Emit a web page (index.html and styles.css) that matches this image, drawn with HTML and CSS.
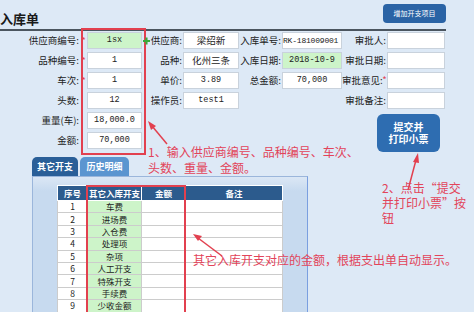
FILE: index.html
```html
<!DOCTYPE html>
<html lang="zh">
<head>
    <meta charset="UTF-8">
    <title>入库单</title>
    <link rel="stylesheet" href="styles.css">
</head>
<body>

<div class="page">
    <div class="top">
        <h1 class="title">入库单</h1>
        <div class="btn_add">增加开支项目</div>
    </div>

    <div class="form">
        <!-- row 1 -->
        <div class="label">供应商编号:</div><div class="star">*</div>
        <div class="input green mono">1sx</div>
        <div class="plus"><svg width="10" height="10" viewBox="0 0 10 10"><path d="M3.5 0h3v3.5H10v3H6.5V10h-3V6.5H0v-3h3.5z" fill="#39a939"/></svg></div>
        <div class="label">供应商:</div><div class="input">梁绍新</div>
        <div class="label">入库单号:</div><div class="input mono narrow">RK-181009001</div>
        <div class="label">审批人:</div><div class="input"></div>
        <!-- row 2 -->
        <div class="label">品种编号:</div><div class="star">*</div>
        <div class="input mono">1</div><div></div>
        <div class="label">品种:</div><div class="input">化州三条</div>
        <div class="label">入库日期:</div><div class="input green mono">2018-10-9</div>
        <div class="label">审批日期:</div><div class="input"></div>
        <!-- row 3 -->
        <div class="label">车次:</div><div class="star">*</div>
        <div class="input mono">1</div><div></div>
        <div class="label">单价:</div><div class="input mono">3.89</div>
        <div class="label">总金额:</div><div class="input mono">70,000</div>
        <div class="label">审批意见:<span class="red">*</span></div><div class="input"></div>
        <!-- row 4 -->
        <div class="label">头数:</div><div></div>
        <div class="input mono">12</div><div></div>
        <div class="label">操作员:</div><div class="input mono">test1</div>
        <div></div><div></div>
        <div class="label">审批备注:</div><div class="input"></div>
        <!-- row 5 -->
        <div class="label">重量(车):</div><div></div>
        <div class="input mono">18,000.0</div>
        <div></div><div></div><div></div><div></div><div></div>
        <!-- row 6 -->
        <div class="label">金额:</div><div></div>
        <div class="input mono">70,000</div>

        <div class="btn_submit">提交并<br>打印小票</div>
    </div>

    <div class="tabs">
        <div class="tab active">其它开支</div>
        <div class="tab">历史明细</div>
    </div>

    <div class="panel">
        <table class="grid">
            <tr>
                <th class="c_no">序号</th>
                <th class="c_name">其它入库开支</th>
                <th class="c_amount">金额</th>
                <th>备注</th>
            </tr>
            <tr><td>1</td><td class="green">车费</td><td></td><td></td></tr>
            <tr><td>2</td><td class="green">进场费</td><td></td><td></td></tr>
            <tr><td>3</td><td class="green">入仓费</td><td></td><td></td></tr>
            <tr><td>4</td><td class="green">处理项</td><td></td><td></td></tr>
            <tr><td>5</td><td class="green">杂项</td><td></td><td></td></tr>
            <tr><td>6</td><td class="green">人工开支</td><td></td><td></td></tr>
            <tr><td>7</td><td class="green">特殊开支</td><td></td><td></td></tr>
            <tr><td>8</td><td class="green">手续费</td><td></td><td></td></tr>
            <tr><td>9</td><td class="green">少收金额</td><td></td><td></td></tr>
        </table>
    </div>

    <!-- annotations drawn over the screen -->
    <div class="mark mark_form"></div>
    <div class="mark mark_table"></div>

    <svg class="arrows" width="474" height="312" viewBox="0 0 474 312">
        <g stroke="#e2404f" stroke-width="1.5" fill="#e2404f">
            <line x1="167" y1="144" x2="152" y2="126"/>
            <polygon points="148,121 156,126 151,130" stroke="none"/>
            <line x1="408" y1="190" x2="416" y2="160"/>
            <polygon points="418,153 419,163 413,162" stroke="none"/>
            <line x1="222" y1="256" x2="198" y2="238"/>
            <polygon points="193,234 202,236 198,241" stroke="none"/>
        </g>
    </svg>

    <div class="note note_one">1、输入供应商编号、品种编号、车次、<br>头数、重量、金额。</div>
    <div class="note note_two">2、点击“提交<br>并打印小票”按<br>钮</div>
    <div class="note note_three">其它入库开支对应的金额，根据支出单自动显示。</div>
</div>

</body>
</html>
```

FILE: styles.css
```css
body {
    margin: 0;
    background: #dde9f6;
    font-family: "Noto Sans CJK SC", "Noto Sans", sans-serif;
    color: #222222;
    overflow: hidden;
}

.page {
    position: relative;
    width: 474px;
    height: 312px;
    overflow: hidden;
}

.top {
    width: 446px;
    height: 29px;
    display: flex;
    justify-content: space-between;
    align-items: flex-start;
    border-bottom: 2px solid #4b555f;
}

.title {
    margin: 11px 0 0 0;
    font-size: 13px;
    line-height: 16px;
    font-weight: bold;
    color: #1a1a1a;
}

.btn_add {
    margin-top: 4px;
    width: 63px;
    height: 19px;
    line-height: 19px;
    text-align: center;
    font-size: 7px;
    color: #ffffff;
    background: #2a63a5;
    border-radius: 4px;
}

.form {
    display: grid;
    grid-template-columns: 80px 7px 55px 8px 33px 56px 43px 60px 45px 58px;
    grid-auto-rows: 17px;
    row-gap: 3px;
    margin-top: 1px;
    font-size: 9.5px;
}

.label {
    text-align: right;
    line-height: 17px;
    padding-right: 1px;
    white-space: nowrap;
}

.red, .star {
    color: #e2404f;
}

.star {
    line-height: 17px;
    text-align: center;
    font-size: 9px;
}

.input {
    background: #ffffff;
    border: 1px solid #c9d2dc;
    line-height: 15px;
    text-align: center;
    white-space: nowrap;
    overflow: hidden;
}

.input.green {
    background: #cdf4c9;
}

.mono {
    font-family: "Liberation Mono", monospace;
    font-size: 8.5px;
}

.narrow {
    font-size: 8px;
    text-align: left;
    letter-spacing: -0.2px;
}

/* the plus sits on top of the red frame */
.plus {
    position: relative;
    z-index: 2;
    display: flex;
    align-items: center;
    justify-content: flex-start;
    margin-left: 1px;
}

.btn_submit {
    grid-column: 9 / 11;
    grid-row: 5 / 7;
    justify-self: end;
    align-self: start;
    margin: 2px 5px 0 0;
    width: 63px;
    height: 38px;
    display: flex;
    align-items: center;
    justify-content: center;
    text-align: center;
    font-size: 10px;
    line-height: 12px;
    font-weight: bold;
    color: #ffffff;
    background: #2e6db1;
    border-radius: 6px;
}

.tabs {
    display: flex;
    gap: 2px;
    margin: 8px 0 0 32px;
}

.tab {
    width: 46px;
    height: 19px;
    line-height: 19px;
    text-align: center;
    font-size: 9px;
    font-weight: bold;
    color: #ffffff;
    background: #5b95d0;
    border-radius: 5px 5px 0 0;
}

.tab + .tab {
    width: 49px;
}

.tab.active {
    background: #2a5f98;
}

.panel {
    width: 250px;
    height: 140px;
    margin-left: 32px;
    padding: 8px 0 0 24px;
    background: linear-gradient(#dbe7f5 0, #c7daef 14px);
    border: 1px solid #9bb6db;
    border-right-color: #7a9fe0;
}

.grid {
    width: 226px;
    border-collapse: collapse;
    font-size: 8.5px;
    text-align: center;
}

.grid th {
    height: 14px;
    background: #2c5b8d;
    color: #ffffff;
    font-weight: bold;
    border: 1px solid #ffffff;
    padding: 0;
}

.grid td {
    height: 11.4px;
    line-height: 11px;
    padding: 0;
    background: #ffffff;
    border: 1px solid #cccccc;
}

.grid td.green {
    background: #cdf4c9;
}

.c_no { width: 29px; }
.c_name { width: 53px; }
.c_amount { width: 43px; }

/* Annotation overlays */
.mark {
    position: absolute;
    border: 2px solid #e2404f;
}

.mark_form {
    left: 81px;
    top: 28px;
    width: 61px;
    height: 123px;
}

.mark_table {
    left: 86px;
    top: 185px;
    width: 96px;
    height: 140px;
}

.arrows {
    position: absolute;
    left: 0;
    top: 0;
}

.note {
    position: absolute;
    color: #e2445a;
    font-size: 12px;
    line-height: 16px;
    white-space: nowrap;
}

.note_one {
    left: 148px;
    top: 144px;
}

.note_two {
    left: 382px;
    top: 180px;
    line-height: 15px;
}

.note_three {
    left: 193px;
    top: 252px;
}
```
